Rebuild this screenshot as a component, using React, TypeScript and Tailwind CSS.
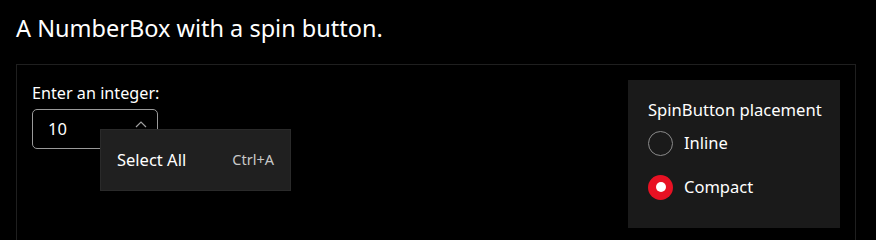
const font = { fontFamily: '"Noto Sans", "Open Sans", sans-serif' };

function RadioOption({ label, checked }: { label: string; checked?: boolean }) {
  return (
    <div className="flex h-[44px] items-center gap-[11px]">
      {checked ? (
        <span className="flex h-[25px] w-[25px] items-center justify-center rounded-full bg-[#e81123]">
          <span className="h-[10px] w-[10px] rounded-full bg-white" />
        </span>
      ) : (
        <span className="h-[25px] w-[25px] rounded-full border-[1.5px] border-[#8a8a8a]" />
      )}
      <span className="text-[16.5px] text-white">{label}</span>
    </div>
  );
}

export default function App() {
  return (
    <div className="h-[240px] w-[876px] overflow-hidden bg-black text-white" style={font}>
      <h1 className="pl-4 pt-[12px] text-[23.5px] leading-[32px] font-normal">
        A NumberBox with a spin button.
      </h1>
      <div className="ml-4 mt-[20px] h-[200px] w-[840px] border border-[#1f1f1f] p-[15px]">
        <div className="flex justify-between">
          <div className="flex flex-col">
            <label className="text-[16.2px] leading-[26px]">Enter an integer:</label>
            <div className="relative mt-[3px] flex h-[40px] w-[126px] items-center justify-between rounded-[5px] border border-[#9a9a9a] pl-[15px] pr-[10px]">
              <span className="text-[16.5px]">10</span>
              <svg width="12" height="7" viewBox="0 0 12 7" className="mb-[9px]" fill="none">
                <path d="M1 6L6 1L11 6" stroke="#a0a0a0" strokeWidth="1.2" />
              </svg>
              <div className="absolute left-[67px] top-[19px] flex h-[62px] w-[191px] items-center justify-between border border-[#2a2a2a] bg-[#202020] px-4 shadow-lg">
                <span className="text-[16.5px] text-white">Select All</span>
                <span className="text-[14.5px] text-[#c8c8c8]">Ctrl+A</span>
              </div>
            </div>
          </div>
          <div className="h-[148px] w-[212px] bg-[#1a1a1a] px-5 pt-[19px]">
            <div className="whitespace-nowrap text-[16.6px] leading-[22px]">
              SpinButton placement
            </div>
            <RadioOption label="Inline" />
            <RadioOption label="Compact" checked />
          </div>
        </div>
      </div>
    </div>
  );
}
